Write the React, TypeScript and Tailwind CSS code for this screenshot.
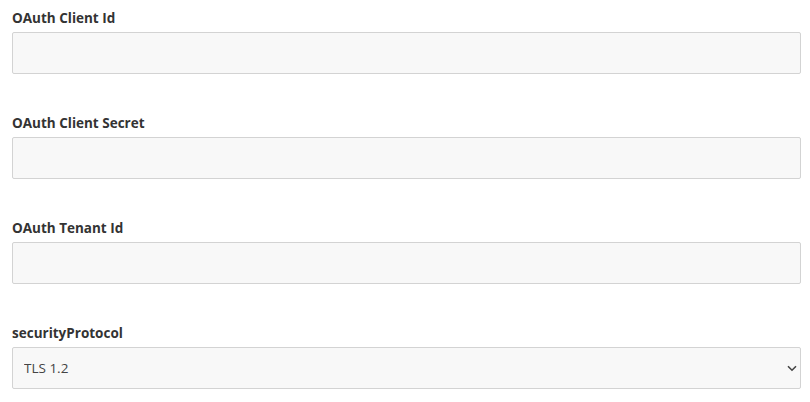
const fields = [
  { label: "OAuth Client Id" },
  { label: "OAuth Client Secret" },
  { label: "OAuth Tenant Id" },
];

export default function App() {
  return (
    <div
      className="w-[810px] h-[402px] bg-white pt-2 pl-3 pr-[9px] text-[#333]"
      style={{ fontFamily: '"Open Sans", "Noto Sans", sans-serif' }}
    >
      {fields.map((f) => (
        <div key={f.label} className="mb-[39px]">
          <label className="block h-5 leading-5 text-[13.5px] font-bold mb-1">{f.label}</label>
          <input
            type="text"
            className="block w-full h-[42px] bg-[#f8f8f8] border border-[#d3d3d3] rounded-[2px] outline-none px-3 text-[13.5px]"
          />
        </div>
      ))}

      <div>
        <label className="block h-5 leading-5 text-[13.5px] font-bold mb-1">securityProtocol</label>
        <div className="relative">
          <select
            defaultValue="TLS 1.2"
            className="block w-full h-[42px] appearance-none bg-[#f8f8f8] border border-[#d3d3d3] rounded-[2px] outline-none pl-[11px] text-[13.5px] text-[#444]"
          >
            <option>TLS 1.2</option>
            <option>TLS 1.3</option>
          </select>
          <svg
            className="absolute right-[4px] top-[18px] pointer-events-none"
            width="10"
            height="7"
            viewBox="0 0 10 7"
            fill="none"
          >
            <path d="M1 1.3 L5 5.2 L9 1.3" stroke="#444" strokeWidth="1.6" />
          </svg>
        </div>
      </div>
    </div>
  );
}
